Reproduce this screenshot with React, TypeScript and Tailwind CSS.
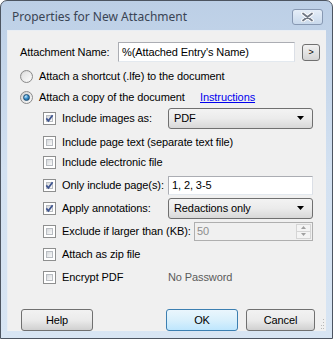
import React from "react"

const ui = { fontFamily: '"Liberation Sans", Arial, sans-serif' }

function Check({ on }: { on?: boolean }) {
  return (
    <span className="relative flex h-[13px] w-[13px] shrink-0 border border-[#8e8f8f] bg-white">
      <span className="m-[2px] flex-1 border border-[#b9bdc2] bg-gradient-to-br from-[#d6d9dc] to-[#fafafa]" />
      {on && (
        <svg className="absolute left-0 top-0" width="11" height="11" viewBox="0 0 11 11">
          <path d="M2.3 5.4 L4.4 7.8 L8.6 2.2" fill="none" stroke="#3f5590" strokeWidth="1.7" />
        </svg>
      )}
    </span>
  )
}

function Radio({ on }: { on?: boolean }) {
  return (
    <span className="flex h-[13px] w-[13px] shrink-0 items-center justify-center rounded-full border border-[#8a8a8a] bg-gradient-to-br from-[#d2d2d2] to-[#fbfbfb]">
      {on ? (
        <span className="h-[7px] w-[7px] rounded-full border border-[#1d4d73] bg-[radial-gradient(circle_at_35%_30%,#c4e8ff_0%,#3d93cf_45%,#0f4f80_100%)]" />
      ) : (
        <span className="h-[9px] w-[9px] rounded-full bg-gradient-to-br from-[#e1e1e1] to-[#fafafa]" />
      )}
    </span>
  )
}

function Combo({ value }: { value: string }) {
  return (
    <div className="flex h-[21px] w-[145px] items-center justify-between rounded-[3px] border border-[#707070] bg-gradient-to-b from-[#f3f3f3] via-[#ebebeb] to-[#d8d8d8] pl-[5px] pr-[7px]">
      <span>{value}</span>
      <svg width="8" height="5" viewBox="0 0 8 5">
        <path d="M0 0 H7 L3.5 4 Z" fill="#000" />
      </svg>
    </div>
  )
}

function Btn({ label, w, main }: { label: string; w: string; main?: boolean }) {
  return (
    <div
      className={`flex h-[22px] ${w} items-center justify-center rounded-[3px] border ${
        main
          ? "border-[#3c7fb1] bg-gradient-to-b from-[#eaf6fd] via-[#d9f0fc] to-[#bee6fd]"
          : "border-[#707070] bg-gradient-to-b from-[#f2f2f2] via-[#ebebeb] to-[#d0d0d0]"
      }`}
    >
      {label}
    </div>
  )
}

function CheckRow({ on, label, mt, children }: { on?: boolean; label: string; mt: string; children?: React.ReactNode }) {
  return (
    <div className={`flex h-[20px] items-center ${mt}`}>
      <div className="flex w-[148px] items-center pl-[23px]">
        <Check on={on} />
        <span className="ml-[6px] whitespace-nowrap">{label}</span>
      </div>
      {children}
    </div>
  )
}

export default function App() {
  return (
    <div
      className="flex h-[339px] w-[333px] flex-col rounded-t-[7px] border border-[#4d5561] bg-gradient-to-b from-[#bccfe6] via-[#d3e1f1] to-[#d8e5f3] text-[11px] tracking-[-0.1px] text-black"
      style={ui}
    >
      <div className="flex h-[29px] items-center justify-between pl-[11px] pr-[9px]">
        <span className="pt-[2px] text-[12px] tracking-normal text-[#3a4454]" style={{ fontFamily: '"Noto Sans", "Open Sans", sans-serif' }}>
          Properties for New Attachment
        </span>
        <div className="mt-[2px] flex h-[16px] w-[31px] items-center justify-center rounded-[3px] border border-[#8798b2] bg-gradient-to-b from-[#e6eef8] to-[#c9d9ec]">
          <svg width="13" height="10" viewBox="0 0 13 10">
            <path d="M2 1.5 L11 8.5 M11 1.5 L2 8.5" stroke="#ffffff" strokeWidth="3.6" strokeLinecap="round" />
            <path d="M2 1.5 L11 8.5 M11 1.5 L2 8.5" stroke="#6f7784" strokeWidth="1.8" strokeLinecap="round" />
          </svg>
        </div>
      </div>

      <div className="relative mx-[6px] mb-[7px] flex flex-1 flex-col border-t border-l border-[#e9eef4] bg-[#f0f0f0] pl-[12px] pt-[11px]">
        <div className="flex h-[20px] items-center">
          <span className="w-[98px] whitespace-nowrap">Attachment Name:</span>
          <div className="flex h-[20px] w-[177px] items-center border border-[#abadb3] border-b-[#e3e9ef] border-r-[#dbdfe6] bg-white pl-[3px]">
            %(Attached Entry's Name)
          </div>
          <div className="ml-[7px] flex h-[17px] w-[18px] items-center justify-center rounded-[3px] border border-[#707070] bg-gradient-to-b from-[#f2f2f2] to-[#d4d4d4] text-[9px] leading-none">
            &gt;
          </div>
        </div>

        <div className="mt-[4px] flex h-[20px] items-center">
          <Radio />
          <span className="ml-[6px] whitespace-nowrap">Attach a shortcut (.lfe) to the document</span>
        </div>
        <div className="mt-[1px] flex h-[20px] items-center">
          <Radio on />
          <span className="ml-[6px] w-[161px] whitespace-nowrap">Attach a copy of the document</span>
          <span className="text-[#0000ee] underline">Instructions</span>
        </div>

        <CheckRow on label="Include images as:" mt="mt-[1px]">
          <Combo value="PDF" />
        </CheckRow>
        <CheckRow label="Include page text (separate text file)" mt="mt-[4px]" />
        <CheckRow label="Include electronic file" mt="mt-0" />
        <CheckRow on label="Only include page(s):" mt="mt-[3px]">
          <div className="flex h-[19px] w-[145px] items-center border border-[#abadb3] border-b-[#e3e9ef] border-r-[#dbdfe6] bg-white pl-[3px]">
            1, 2, 3-5
          </div>
        </CheckRow>
        <CheckRow on label="Apply annotations:" mt="mt-[3px]">
          <Combo value="Redactions only" />
        </CheckRow>
        <CheckRow label="Exclude if larger than (KB):" mt="mt-[3px]">
          <div className="ml-[26px] flex h-[19px] w-[119px] items-center justify-between border border-[#afafaf] bg-[#f0f0f0] pl-[2px] pr-[1px] text-[#8d8d8d]">
            <span>50</span>
            <div className="flex h-[15px] w-[15px] flex-col border border-[#d5d5d5] bg-[#f4f4f4]">
              <div className="flex flex-1 items-center justify-center border-b border-[#d5d5d5]">
                <svg width="5" height="3" viewBox="0 0 5 3">
                  <path d="M0 3 L2.5 0 L5 3 Z" fill="#a0a0a0" />
                </svg>
              </div>
              <div className="flex flex-1 items-center justify-center">
                <svg width="5" height="3" viewBox="0 0 5 3">
                  <path d="M0 0 H5 L2.5 3 Z" fill="#a0a0a0" />
                </svg>
              </div>
            </div>
          </div>
        </CheckRow>
        <CheckRow label="Attach as zip file" mt="mt-[3px]" />
        <CheckRow label="Encrypt PDF" mt="mt-[3px]">
          <span className="text-[#5b5b5b]">No Password</span>
        </CheckRow>

        <div className="mt-[22px] flex items-center pl-[1px]">
          <Btn label="Help" w="w-[72px]" />
          <div className="ml-[73px]">
            <Btn label="OK" w="w-[72px]" main />
          </div>
          <div className="ml-[8px]">
            <Btn label="Cancel" w="w-[69px]" />
          </div>
        </div>

        <svg className="absolute bottom-[2px] right-[1px]" width="4" height="10" viewBox="0 0 4 10">
          <rect x="2" y="0" width="1" height="1" fill="#b8b8b8" />
          <rect x="2" y="3" width="1" height="1" fill="#b8b8b8" />
          <rect x="0" y="6" width="1" height="1" fill="#b8b8b8" />
          <rect x="2" y="6" width="1" height="1" fill="#b8b8b8" />
          <rect x="0" y="9" width="1" height="1" fill="#b8b8b8" />
          <rect x="2" y="9" width="1" height="1" fill="#b8b8b8" />
        </svg>
      </div>
    </div>
  )
}
